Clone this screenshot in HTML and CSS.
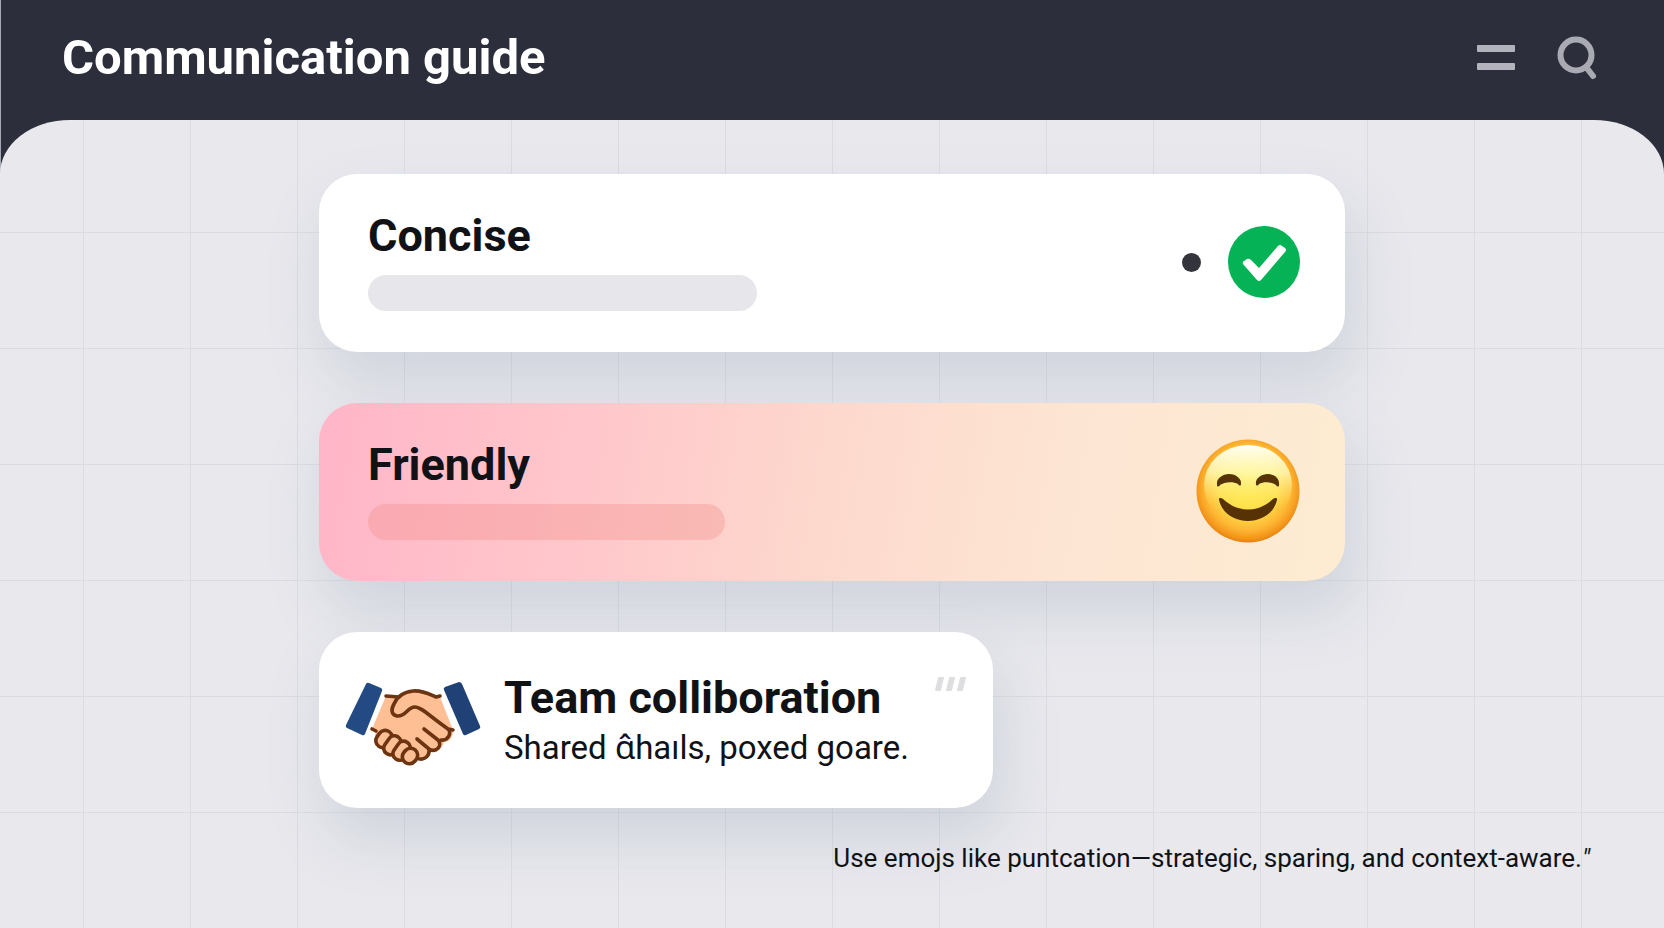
FILE: index.html
```html
<!DOCTYPE html>
<html lang="en">
<head>
    <meta charset="UTF-8">
    <meta name="viewport" content="width=device-width, initial-scale=1.0">
    <title>Communication guide</title>
    <link rel="stylesheet" href="styles.css">
</head>
<body>
    <!-- Top bar -->
    <header class="topbar">
        <h1>Communication guide</h1>
        <nav class="actions">
            <button type="button" aria-label="Menu">
                <svg width="38" height="26" viewBox="0 0 38 26">
                    <rect x="0" y="0" width="38" height="7" rx="1"/>
                    <rect x="0" y="18" width="38" height="7" rx="1"/>
                </svg>
            </button>
            <button type="button" aria-label="Search">
                <svg width="40" height="44" viewBox="0 0 40 44">
                    <circle cx="19" cy="19" r="15.5" fill="none" stroke="#a9aab2" stroke-width="6"/>
                    <path d="M29 31L36 40" fill="none" stroke="#a9aab2" stroke-width="6" stroke-linecap="round"/>
                </svg>
            </button>
        </nav>
    </header>

    <main class="board">
        <div class="cards">
            <section class="card">
                <div class="card-text">
                    <h2>Concise</h2>
                    <div class="bar"></div>
                </div>
                <div class="status">
                    <span class="dot"></span>
                    <svg width="72" height="72" viewBox="0 0 72 72">
                        <circle cx="36" cy="36" r="36" fill="#05b356"/>
                        <path d="M15 38Q14 36 16 35L19 33Q21 32 23 34L31 42L50 20Q52 18 54 20L57 22Q59 24 57 26L33 54Q31 56 29 54Z" fill="#fff"/>
                    </svg>
                </div>
            </section>

            <section class="card card-friendly">
                <div class="card-text">
                    <h2>Friendly</h2>
                    <div class="bar"></div>
                </div>
                <!-- Smiling face -->
                <svg width="104" height="104" viewBox="0 0 104 104">
                    <defs>
                        <radialGradient id="face" cx="0.5" cy="0.46" r="0.56">
                            <stop offset="0" stop-color="#ffe94e"/>
                            <stop offset="0.5" stop-color="#ffdc48"/>
                            <stop offset="0.75" stop-color="#fdb633"/>
                            <stop offset="0.9" stop-color="#f3951a"/>
                            <stop offset="1" stop-color="#dc7606"/>
                        </radialGradient>
                        <linearGradient id="shine" x1="0" y1="0" x2="0" y2="1">
                            <stop offset="0" stop-color="#fffff4"/>
                            <stop offset="0.35" stop-color="#fffbb8" stop-opacity="0.8"/>
                            <stop offset="0.8" stop-color="#ffec60" stop-opacity="0"/>
                        </linearGradient>
                    </defs>
                    <circle cx="52" cy="52" r="51.5" fill="url(#face)"/>
                    <ellipse cx="52" cy="46" rx="44" ry="40" fill="url(#shine)"/>
                    <path d="M21 46C20 39 27 35 33 35C40 35 46 40 45 45C45 47 43 47 42 45C37 42 28 43 24 46C23 48 21 48 21 46Z" fill="#563205"/>
                    <path d="M60 45C59 40 65 35 72 35C78 35 84 39 83 46C83 48 81 48 80 46C76 43 68 42 63 45C62 47 60 47 60 45Z" fill="#563205"/>
                    <path d="M23 61C22 59 25 58 27 60C42 74 62 74 77 60C79 58 82 59 81 61C78 74 66 82 52 82C38 82 26 74 23 61Z" fill="#563205"/>
                </svg>
            </section>

            <section class="card card-team">
                <!-- Handshake -->
                <svg class="handshake" width="136" height="86" viewBox="0 0 136 86">
                    <path d="M21 2Q22 0 24 1L36 6Q38 7 37 9L20 52Q19 54 17 53L2 46Q0 45 1 43Z" fill="#234a83"/>
                    <path d="M99 8Q98 6 100 5L114 0Q116 0 117 2L135 44Q136 46 134 47L121 53Q119 54 118 52Z" fill="#1f4175"/>
                    <path d="M41 14L54 15C63 7 74 6 82 10L95 15L108 48C108 55 105 60 99 60C97 67 92 71 86 70C84 77 78 80 71 78C68 83 62 84 57 78C51 78 46 75 46 69C41 69 38 66 37 61C31 59 29 54 31 50L27 47Z" fill="#fdbf93"/>
                    <g fill="#fdbf93" stroke="#6d3412" stroke-width="3.6" stroke-linecap="round" stroke-linejoin="round">
                        <path d="M41 14L54 15M27 47L31 49M95 14L91 15C84 12 77 8 68 9C58 10 52 15 49 22C46 27 46 33 52 34C61 35 62 25 70 25C76 25 82 32 103 47C107 51 103 59 96 58M103 47L108 48" fill="none"/>
                        <path d="M79 47L93 58C98 64 91 71 84 67L72 57M84 67C85 75 78 79 72 76" fill="none"/>
                        <rect x="32" y="48" width="14" height="18" rx="7" transform="rotate(35 39 57)"/>
                        <rect x="41" y="53" width="13" height="20" rx="6" transform="rotate(35 47 63)"/>
                        <rect x="50" y="59" width="13" height="20" rx="6" transform="rotate(35 57 69)"/>
                        <rect x="58" y="66" width="14" height="16" rx="7" transform="rotate(40 65 74)"/>
                    </g>
                </svg>
                <div class="card-text">
                    <h2>Team colliboration</h2>
                    <p>Shared ɑ̂haıls, poxed goare.</p>
                </div>
                <svg class="quote" width="32" height="16" viewBox="0 0 32 16">
                    <path d="M3 2Q3 1 4 1H8Q9 1 9 2L6 14Q6 15 5 15H1Q0 15 0 14ZM14 2Q14 1 15 1H19Q20 1 20 2L17 14Q17 15 16 15H12Q11 15 11 14ZM25 2Q25 1 26 1H30Q31 1 31 2L28 14Q28 15 27 15H23Q22 15 22 14Z" fill="#dedee1"/>
                </svg>
            </section>
        </div>
        <p class="footnote">Use emojs like puntcation—strategic, sparing, and context-aware.<i>″</i></p>
    </main>
</body>
</html>
```
FILE: styles.css
```css
* {
    box-sizing: border-box;
}

body {
    margin: 0;
    min-height: 100vh;
    display: flex;
    flex-direction: column;
    background-color: #2c2f3b;
    /* thin light edge down the left side */
    background-image: linear-gradient(to right, #a5a9b2 1px, transparent 1px);
    font-family: Roboto, "Noto Sans", sans-serif;
    color: #111216;
}

h1, h2, p {
    margin: 0;
}

/* Top bar */
.topbar {
    display: flex;
    justify-content: space-between;
    align-items: center;
    height: 120px;
    padding: 0 67px 5px 62px;
}

.topbar h1 {
    font-size: 49px;
    line-height: 60px;
    font-weight: 700;
    color: #fff;
}

.actions {
    display: flex;
    align-items: center;
    gap: 42px;
}

.actions button {
    display: flex;
    padding: 0;
    border: 0;
    background: none;
    cursor: pointer;
}

.actions rect {
    fill: #b2b3bd;
}

/* Content area with grid lines */
.board {
    flex: 1;
    padding: 54px 74px 56px;
    border-radius: 70px 70px 0 0 / 54px 54px 0 0;
    background-color: #e8e8ed;
    background-image:
        linear-gradient(to right, #dadce1 1px, transparent 1px),
        linear-gradient(to bottom, #dadce1 1px, transparent 1px);
    background-size: 107px 116px;
    background-position: 83px 112px;
}

.cards {
    display: flex;
    flex-direction: column;
    gap: 51px;
    max-width: 1026px;
    margin: 0 auto;
}

.card {
    display: flex;
    justify-content: space-between;
    align-items: center;
    min-height: 178px;
    padding: 34px 45px 36px 49px;
    border-radius: 38px;
    background-color: #fff;
    box-shadow: 8px 30px 56px rgba(140, 155, 175, 0.26);
}

.card h2 {
    font-size: 45px;
    line-height: 52px;
    font-weight: 700;
}

.bar {
    width: 389px;
    height: 36px;
    margin: 13px 0 4px;
    border-radius: 18px;
    background-color: #e7e7eb;
}

.status {
    display: flex;
    align-items: center;
    gap: 27px;
}

.dot {
    width: 19px;
    height: 19px;
    border-radius: 50%;
    background-color: #34343c;
}

.card-friendly {
    background-image: linear-gradient(100deg, #ffb5c8 0%, #ffc8cb 28%, #fdd9cd 50%, #fde5d3 72%, #fdecd2 100%);
}

.card-friendly .bar {
    width: 357px;
    background-color: rgba(240, 140, 135, 0.35);
}

.card-team {
    justify-content: flex-start;
    gap: 23px;
    width: 674px;
    max-width: 100%;
    min-height: 175px;
    padding: 40px 26px 36px;
}

.card-team p {
    font-size: 33px;
    line-height: 48px;
}

.handshake {
    margin-top: 6px;
}

.quote {
    align-self: flex-start;
    margin: 4px 0 0 auto;
}

.footnote {
    margin-top: 32px;
    font-size: 26px;
    line-height: 36px;
    text-align: right;
}
```
